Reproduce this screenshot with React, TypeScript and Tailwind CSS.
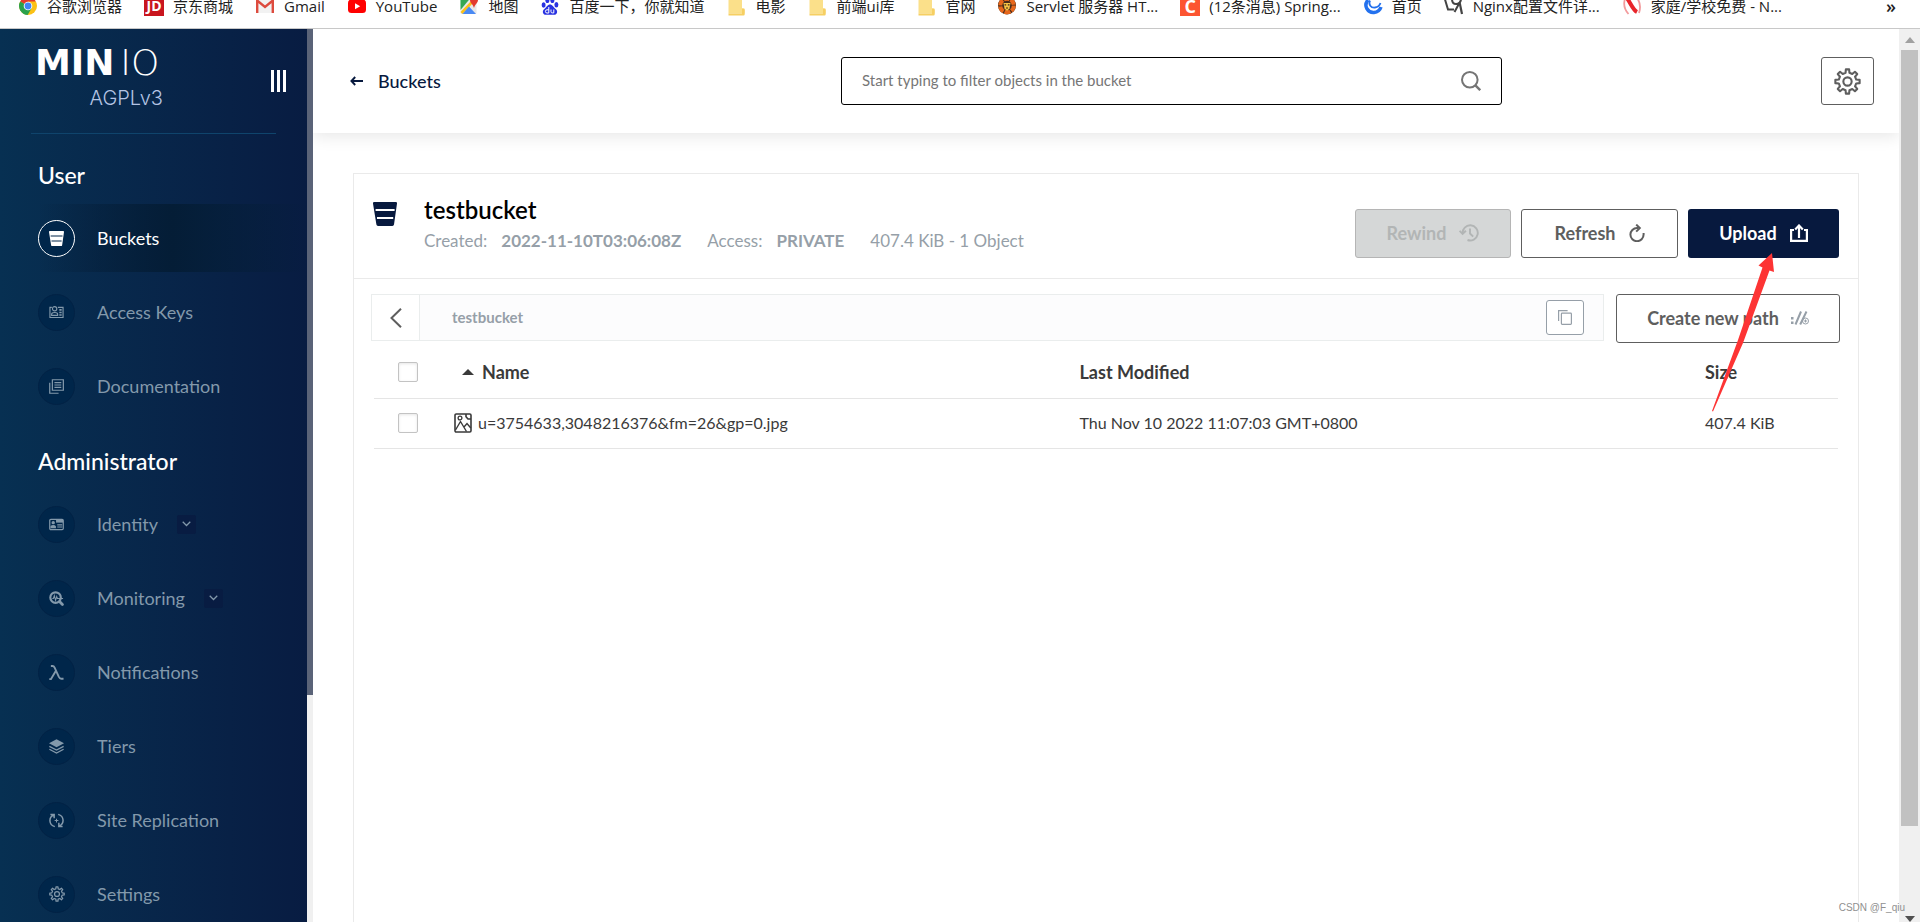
import React from "react";

type IconProps = { className?: string };

function gearPath(cx: number, cy: number, outer: number, inner: number, teeth: number): string {
  const points: string[] = [];
  const step = (Math.PI * 2) / teeth;
  const add = (angle: number, radius: number) =>
    points.push(`${(cx + Math.sin(angle) * radius).toFixed(2)} ${(cy - Math.cos(angle) * radius).toFixed(2)}`);
  for (let i = 0; i < teeth; i++) {
    const a = i * step;
    add(a - step * 0.28, inner);
    add(a - step * 0.17, outer);
    add(a + step * 0.17, outer);
    add(a + step * 0.28, inner);
  }
  return `M${points.join("L")}Z`;
}

const GearIcon = ({ className }: IconProps) => (
  <svg viewBox="0 0 26 26" className={className} fill="none" stroke="currentColor" strokeWidth="2" strokeLinejoin="round">
    <path d={gearPath(13, 13, 11.8, 8.6, 8)} />
    <ellipse cx="13" cy="13" rx="4" ry="4" />
  </svg>
);

const BucketIcon = ({ className, line }: IconProps & { line: string }) => (
  <svg viewBox="0 0 24 24" className={className}>
    <path fill="currentColor" d="M1.2 0h21.6a1.2 1.2 0 0 1 1.2 1.4L21 22.6a1.7 1.7 0 0 1-1.7 1.4H5.100a1.700 1.700 0 0 1-1.700-1.400L0 1.400A1.200 1.200 0 0 1 1.200 0Z" />
    <path stroke={line} strokeWidth="1.8" d="M2.600 8h19M4 16h16.200" />
  </svg>
);

const AccessKeysIcon = ({ className }: IconProps) => (
  <svg viewBox="0 0 16 16" className={className} fill="none" stroke="currentColor" strokeWidth="1.2">
    <path d="M3 2.500H1v10.800h14V2.500H9.500" />
    <circle cx="6" cy="4" r="2.300" />
    <path d="M2.800 11V9.800C2.800 8.500 4 8 6 8s3.200.5 3.200 1.800V11Z" />
    <path d="M11 5.200h2.500M11 8h2.500M11 10.700h2.500" strokeWidth="1.700" />
  </svg>
);

const DocumentationIcon = ({ className }: IconProps) => (
  <svg viewBox="0 0 16 16" className={className} fill="none" stroke="currentColor" strokeWidth="1.300">
    <path d="M3.600.8h11.700v11.200H3.600ZM.8 4v11.200h9.400" />
    <path d="M5.800 3.800h7.300M5.800 6.400h7.300M5.800 9h7.300" />
  </svg>
);

const IdentityIcon = ({ className }: IconProps) => (
  <svg viewBox="0 0 16 16" className={className}>
    <rect x=".8" y="2.600" width="14.400" height="10.800" rx="1.200" fill="none" stroke="currentColor" strokeWidth="1.300" />
    <path fill="currentColor" d="M7.500 3H15v3H7.500Z" />
    <circle cx="4.500" cy="6" r="1.800" fill="currentColor" />
    <path fill="currentColor" d="M1.600 12V9.800q1-1.200 2.900-1.200T7.400 9.800V12Z" />
    <path stroke="currentColor" strokeWidth="1.200" d="M8.800 8.400H14M8.800 10.700H14" />
  </svg>
);

const MonitoringIcon = ({ className }: IconProps) => (
  <svg viewBox="0 0 16 16" className={className} fill="none" stroke="currentColor">
    <circle cx="7" cy="7" r="5.600" strokeWidth="2.300" />
    <path strokeWidth="3" strokeLinecap="round" d="m11.500 11.500 2.800 2.800" />
    <path strokeWidth="1.100" d="M3.500 8h1.200l1-3 1.300 5 1.200-4 .8 2H15" />
  </svg>
);

const LambdaIcon = ({ className }: IconProps) => (
  <svg viewBox="0 0 16 16" className={className} fill="none" stroke="currentColor" strokeWidth="2">
    <path d="M2 1h1.800c1.200 0 1.600.6 2.200 1.900l4.500 9.800c.7 1.400 1.200 2 2.500 2h2.500M7.400 6.200 2 15.200H.3" />
  </svg>
);

const TiersIcon = ({ className }: IconProps) => (
  <svg viewBox="0 0 16 16" className={className} fill="none" stroke="currentColor" strokeWidth="1.400">
    <path fill="currentColor" stroke="none" d="M8 .3 16 4.500 8 8.800 0 4.500Z" />
    <path d="m.4 7.800 7.600 4 7.600-4M.4 10.900l7.600 4 7.600-4" />
  </svg>
);

const ReplicationIcon = ({ className }: IconProps) => (
  <svg viewBox="0 0 16 16" className={className} fill="none" stroke="currentColor" strokeWidth="1.600">
    <path d="M6.200 14.500C-.5 12.500-.5 4.500 5 2.200M1.500 1.500h4v4M9.800 1.500c6.700 2 6.700 10 1.200 12.300M14.500 14.500h-4v-4" />
    <path strokeWidth="1.100" d="M8 6v4M6 8h4" />
  </svg>
);

const SearchIcon = ({ className }: IconProps) => (
  <svg viewBox="0 0 20 20" className={className} fill="none" stroke="currentColor" strokeWidth="2">
    <circle cx="8.800" cy="8.800" r="7.800" />
    <path strokeWidth="2.400" d="m14.200 14.200 5 5" />
  </svg>
);

const RewindIcon = ({ className }: IconProps) => (
  <svg viewBox="0 0 20 18" className={className} fill="none" stroke="currentColor" strokeWidth="1.900">
    <path d="M3.600 9.500A7.600 7.600 0 1 1 8.500 16" />
    <path d="m.6 6.800 3 3.200 3.300-3.200M11 4.500v5l3.200 3.200" />
  </svg>
);

const RefreshIcon = ({ className }: IconProps) => (
  <svg viewBox="0 0 16 18" className={className} fill="none" stroke="currentColor" strokeWidth="2">
    <path d="M9.500 4H8a6.600 6.600 0 1 0 6.600 6.600V9" />
    <path d="m7.200.6 3.600 3.500-3.600 3.500" />
  </svg>
);

const UploadIcon = ({ className }: IconProps) => (
  <svg viewBox="0 0 18 18" className={className} fill="none" stroke="currentColor" strokeWidth="2.200">
    <path d="M4 6H1.100v10.900h15.800V6H14M9 14V2" />
    <path d="M5.200 5.400 9 1.500l3.800 3.900" />
  </svg>
);

const PathIcon = ({ className }: IconProps) => (
  <svg viewBox="0 0 18 14" className={className} fill="none" stroke="currentColor">
    <path fill="currentColor" stroke="none" d="M0 6h2.500v2.400H0ZM0 10.600h2.500V13H0Z" />
    <path strokeWidth="2" d="M4.500 13.500 10 .5M9.200 13.500 15.500.5" />
    <circle cx="14.500" cy="10" r="3" strokeWidth="1" />
    <path strokeWidth="1" d="M14.500 8.500v3M13 10h3" />
  </svg>
);

const CopyIcon = ({ className }: IconProps) => (
  <svg viewBox="0 0 14 15" className={className} fill="none" stroke="currentColor" strokeWidth="1.200">
    <path d="M.6 11V.6h9" />
    <rect x="3.400" y="3.200" width="10" height="11.200" rx=".8" />
  </svg>
);

const ImageFileIcon = ({ className }: IconProps) => (
  <svg viewBox="0 0 18 20" className={className} fill="none" stroke="currentColor" strokeWidth="1.600">
    <path d="M12 1H2.200A1.200 1.200 0 0 0 1 2.200v15.600A1.200 1.200 0 0 0 2.200 19h13.600a1.200 1.200 0 0 0 1.200-1.200V2.200A1.200 1.200 0 0 0 15.800 1H12v2.800L14 6h3" />
    <circle cx="6" cy="5" r="1.900" strokeWidth="1.300" />
    <path strokeWidth="1.400" d="M1.500 17 6.500 8.500l6 10M10 14l3-3.500 3.800 4.500" />
  </svg>
);

/* Bookmark favicons */
const ChromeFavicon = () => (
  <svg viewBox="0 0 20 20" className="size-5 shrink-0">
    <circle cx="10" cy="10" r="9" fill="#fbc116" />
    <path fill="#e33b2e" d="M10 10V1a9 9 0 0 1 7.800 4.500H10ZM10 10 2.200 5.500A9 9 0 0 1 17.800 5.500H10Z" />
    <path fill="#2aa14c" d="M2.200 5.500A9 9 0 0 0 9.600 19l4-6.800L10 10Z" />
    <circle cx="10" cy="10" r="4.300" fill="#fff" />
    <circle cx="10" cy="10" r="3.400" fill="#4285f4" />
  </svg>
);

const LetterFavicon = ({ text, className }: { text: string; className: string }) => (
  <span className={`flex size-5 shrink-0 items-center justify-center ${className}`}>{text}</span>
);

const GmailFavicon = () => (
  <svg viewBox="0 0 20 20" className="size-5 shrink-0">
    <path fill="#f2f2f2" d="M1 4h18v13H1Z" />
    <path fill="none" stroke="#dd4b3e" strokeWidth="2.400" d="M2.200 17V4.500L10 11l7.800-6.500V17" />
  </svg>
);

const YouTubeFavicon = () => (
  <svg viewBox="0 0 20 20" className="size-5 shrink-0">
    <rect x="1" y="3.500" width="18" height="13.500" rx="3.500" fill="#f00" />
    <path fill="#fff" d="m8 7.200 5.200 3L8 13.200Z" />
  </svg>
);

const MapsFavicon = () => (
  <svg viewBox="0 0 20 20" className="size-5 shrink-0">
    <rect x="1.500" y="2" width="16" height="16" rx="1.500" fill="#e8e8e8" />
    <path fill="#34a853" d="M1.500 2h10L1.500 14Z" />
    <path fill="#fbc116" d="M1.500 16 14 3l2 2L3.500 18Z" />
    <path fill="#4a8af4" d="m10 10.500 7 7.500H3.500Z" />
    <path fill="#e33b2e" d="M15 0a4 4 0 0 0-4 4c0 3 3 4 4 8 1-4 4-5 4-8a4 4 0 0 0-4-4Z" />
  </svg>
);

const BaiduFavicon = () => (
  <svg viewBox="0 0 20 20" className="size-5 shrink-0" fill="#2932e1">
    <ellipse cx="3.600" cy="9" rx="2" ry="2.700" />
    <ellipse cx="7.400" cy="4.200" rx="2" ry="2.800" />
    <ellipse cx="12.400" cy="4.200" rx="2" ry="2.800" />
    <ellipse cx="16.400" cy="8.800" rx="2" ry="2.700" />
    <path d="M10 8.500c2.400 0 3.400 2.800 5.600 4.500 2.800 2.200 1.500 6-1.800 5.800-2.500-.2-5.100-.2-7.600 0-3.300.2-4.600-3.600-1.800-5.800C6.600 11.300 7.600 8.500 10 8.500Z" />
    <path fill="none" stroke="#fff" strokeWidth="1" d="M8.800 11v6H7a1.500 1.500 0 0 1 0-3.200h1.800M11 13.500v2.200q0 1.200 1.200 1.200h1.600v-3.400" />
  </svg>
);

const FolderFavicon = () => (
  <svg viewBox="0 0 20 20" className="size-5 shrink-0">
    <path fill="#fbe08a" d="M2.500 1.500h12A1.500 1.500 0 0 1 16 3v9.500h2.500v5h-16Z" />
    <path fill="#f6cf62" d="M2.500 17.500v2h15a1.200 1.200 0 0 0 1.200-1.200V14a1.500 1.500 0 0 0-1.500-1.500H16v5Z" />
  </svg>
);

const LionFavicon = () => (
  <svg viewBox="0 0 20 20" className="size-5 shrink-0">
    <circle cx="10" cy="9.500" r="9" fill="#4a2d1b" />
    <g fill="none" stroke="#e8671b" strokeWidth="4">
      <circle cx="10" cy="9.500" r="6.800" strokeDasharray="6 1.120" />
    </g>
    <path fill="#f6c445" d="M6.500 7h7l-1 5.500L10 15l-2.500-2.500Z" />
    <path stroke="#3b2415" strokeWidth="1.200" d="M7.500 8.800h1.700M10.800 8.800h1.700M9 12h2" />
  </svg>
);

const SwirlFavicon = () => (
  <svg viewBox="0 0 20 20" className="size-5 shrink-0" fill="none" stroke="#2371ee">
    <path strokeWidth="3.500" d="M5 4c-5 6 0 13 6 12.500 3.500-.3 6-2.500 7-5.500" />
    <path strokeWidth="1.800" d="M7 4.500c-2 4 1 7.500 5 7 2.500-.3 4.500-1.500 5.500-4.500" />
  </svg>
);

const NginxFavicon = () => (
  <svg viewBox="0 0 20 20" className="size-5 shrink-0" fill="none" stroke="#444">
    <path strokeWidth="2" d="M1 3.500 4 13.500h6M8 3q0 5 4 5t5-4L10.500 16" />
    <path strokeWidth="2.200" d="m15.500 6 2.500 12" />
  </svg>
);

const RibbonFavicon = () => (
  <svg viewBox="0 0 20 20" className="size-5 shrink-0" fill="none">
    <path stroke="#e8252b" strokeWidth="4" d="M5.500 3c2.500 3 5.500 11 9.500 13" />
    <path stroke="#f29b9d" strokeWidth="1.800" d="M3 3c-2 6 0 11 3.500 15M17 17c2-6 1-11-2-15" />
  </svg>
);

const bookmarks: { label: string; icon: React.ReactNode }[] = [
  { label: "谷歌浏览器", icon: <ChromeFavicon /> },
  { label: "京东商城", icon: <LetterFavicon text="JD" className="bg-[#c9151e] text-sm font-bold text-white" /> },
  { label: "Gmail", icon: <GmailFavicon /> },
  { label: "YouTube", icon: <YouTubeFavicon /> },
  { label: "地图", icon: <MapsFavicon /> },
  { label: "百度一下，你就知道", icon: <BaiduFavicon /> },
  { label: "电影", icon: <FolderFavicon /> },
  { label: "前端ui库", icon: <FolderFavicon /> },
  { label: "官网", icon: <FolderFavicon /> },
  { label: "Servlet 服务器 HT...", icon: <LionFavicon /> },
  { label: "(12条消息) Spring...", icon: <LetterFavicon text="C" className="bg-[#fc5531] text-lg font-bold text-white" /> },
  { label: "首页", icon: <SwirlFavicon /> },
  { label: "Nginx配置文件详...", icon: <NginxFavicon /> },
  { label: "家庭/学校免费 - N...", icon: <RibbonFavicon /> },
];

function BookmarksBar() {
  return (
    <nav
      aria-label="Bookmarks"
      className="flex h-[29px] shrink-0 items-start justify-between overflow-hidden border-b border-[#c8c8c8] bg-white pr-6 pl-[18px] font-['Open_Sans','Noto_Sans_CJK_SC',sans-serif] text-[15px] leading-5 text-[#222]"
    >
      <ul className="-mt-1 flex gap-[22px]">
        {bookmarks.map((b) => (
          <li key={b.label}>
            <a href="#" className="flex items-center gap-[9px] whitespace-nowrap">
              {b.icon}
              <span>{b.label}</span>
            </a>
          </li>
        ))}
      </ul>
      <button type="button" aria-label="More bookmarks" className="-mt-1 text-lg leading-5 font-semibold">
        »
      </button>
    </nav>
  );
}

type NavEntry = { label: string; icon: React.ReactNode; active?: boolean; expandable?: boolean };

const userItems: NavEntry[] = [
  { label: "Buckets", icon: <BucketIcon className="size-[15px]" line="#00264a" />, active: true },
  { label: "Access Keys", icon: <AccessKeysIcon className="size-[15px]" /> },
  { label: "Documentation", icon: <DocumentationIcon className="size-[15px]" /> },
];

const adminItems: NavEntry[] = [
  { label: "Identity", icon: <IdentityIcon className="size-[15px]" />, expandable: true },
  { label: "Monitoring", icon: <MonitoringIcon className="size-[15px]" />, expandable: true },
  { label: "Notifications", icon: <LambdaIcon className="size-[15px]" /> },
  { label: "Tiers", icon: <TiersIcon className="size-[15px]" /> },
  { label: "Site Replication", icon: <ReplicationIcon className="size-[15px]" /> },
  { label: "Settings", icon: <GearIcon className="size-4" /> },
];

function NavItem({ label, icon, active, expandable }: NavEntry) {
  return (
    <li>
      <a
        href="#"
        className={
          active
            ? "flex h-[68px] items-center bg-linear-to-r from-transparent via-[#041d36] to-transparent text-white"
            : "flex h-[68px] items-center text-[#8399ab]"
        }
      >
        <span
          className={
            active
              ? "flex size-[37px] items-center justify-center rounded-full border border-white bg-[#00264a]"
              : "flex size-[37px] items-center justify-center rounded-full border border-[#022245] bg-[#00264a]"
          }
        >
          {icon}
        </span>
        <span className="ml-[22px] text-lg">{label}</span>
        {expandable && (
          <span className="ml-[19px] flex size-[19px] items-center justify-center rounded-xs bg-[#081c42]">
            <svg viewBox="0 0 10 6" className="w-[9px]" fill="none" stroke="currentColor" strokeWidth="1.400">
              <path d="m.8.800 4.200 4.200 4.200-4.200" />
            </svg>
          </span>
        )}
      </a>
    </li>
  );
}

function NavSection({ title, items }: { title: string; items: NavEntry[] }) {
  return (
    <section>
      <h2 className="flex h-[70px] items-center pt-3 text-[23px] font-medium text-white">{title}</h2>
      <ul className="flex flex-col gap-1.5">
        {items.map((item) => (
          <NavItem key={item.label} {...item} />
        ))}
      </ul>
    </section>
  );
}

function Sidebar() {
  return (
    <aside className="flex w-[313px] shrink-0 overflow-hidden">
      <div className="flex-1 bg-linear-to-r from-[#073052] to-[#081c42]">
        <div className="mx-[31px] flex h-[105px] justify-between border-b border-[#0f446c] pl-1">
          <div className="flex w-32 flex-col pt-[17px]">
            <div className="flex gap-1.5 text-4xl leading-[34px] text-white">
              <span className="font-['DejaVu_Sans',sans-serif] font-bold">MIN</span>
              <span className="font-['DejaVu_Sans_Light','DejaVu_Sans',sans-serif] font-extralight">IO</span>
            </div>
            <div className="pt-1.5 text-right font-['Inter',sans-serif] text-xl leading-6 font-light text-[#b4c4e4]">AGPLv3</div>
          </div>
          <button type="button" aria-label="Collapse menu" className="mt-[41px] -mr-2.5 flex h-[22px] gap-[3px] self-start">
            <span className="w-[3px] self-stretch bg-white" />
            <span className="w-[3px] self-stretch bg-white" />
            <span className="w-[3px] self-stretch bg-white" />
          </button>
        </div>
        <nav aria-label="Main" className="pl-[38px]">
          <NavSection title="User" items={userItems} />
          <NavSection title="Administrator" items={adminItems} />
        </nav>
      </div>
      <div aria-hidden="true" className="flex w-1.5 flex-col bg-[#f0f0f0]">
        <div className="h-[74.6%] bg-[#5a6378]" />
      </div>
    </aside>
  );
}

function PageHeader() {
  return (
    <header className="relative grid h-[104px] shrink-0 grid-cols-[491fr_661fr_372fr] items-center bg-white pr-[25px] pl-[37px] shadow-[0_3px_16px_rgba(0,0,0,0.1)]">
      <a href="#" className="flex items-center gap-[15px] text-lg font-medium text-[#07193e]">
        <svg viewBox="0 0 13 10" className="w-[13px]" fill="none" stroke="currentColor" strokeWidth="1.900">
          <path d="M13 5H2M5.200 1 1.400 5l3.800 4" />
        </svg>
        Buckets
      </a>
      <div className="flex h-12 items-center rounded-[3px] border border-black px-5">
        <input
          type="search"
          aria-label="Filter objects"
          placeholder="Start typing to filter objects in the bucket"
          className="min-w-0 flex-1 pb-0.5 text-[15px] outline-none placeholder:text-[#767676]"
        />
        <SearchIcon className="size-5 text-[#757575]" />
      </div>
      <button type="button" aria-label="Settings" className="flex h-12 w-[53px] items-center justify-center justify-self-end rounded-[3px] border border-[#5e5e5e] text-[#5e5e5e]">
        <GearIcon className="size-[27px]" />
      </button>
    </header>
  );
}

function BucketSummary() {
  return (
    <div className="flex h-[105px] items-start justify-between border-b border-[#eaeaea] px-[19px]">
      <div className="flex gap-[27px]">
        <BucketIcon className="mt-7 size-6 text-[#07193e]" line="#fff" />
        <div className="pt-[21px]">
          <h1 className="text-2xl leading-[30px] font-semibold text-black">testbucket</h1>
          <div className="flex gap-[26px] text-[17px] leading-8 text-[#969fa8]">
            <span className="flex gap-3.5">
              Created: <strong className="font-bold">2022-11-10T03:06:08Z</strong>
            </span>
            <span className="flex gap-3.5">
              Access: <strong className="font-bold">PRIVATE</strong>
            </span>
            <span>407.4 KiB - 1 Object</span>
          </div>
        </div>
      </div>
      <div className="flex gap-2.5 pt-[35px] text-lg font-bold">
        <button type="button" disabled className="flex h-[49px] w-[156px] items-center justify-center gap-[13px] rounded-[3px] border border-[#b5b5b5] bg-[#d5d7d7] pb-0.5 text-[#b2b5b5]">
          Rewind <RewindIcon className="w-5" />
        </button>
        <button type="button" className="flex h-[49px] w-[157px] items-center justify-center gap-[13px] rounded-[3px] border border-[#5e5e5e] pb-0.5 text-[#5e5e5e]">
          Refresh <RefreshIcon className="w-4" />
        </button>
        <button type="button" className="flex h-[49px] w-[151px] items-center justify-center gap-[13px] rounded-[3px] bg-[#07193e] pb-0.5 text-white">
          Upload <UploadIcon className="w-[18px]" />
        </button>
      </div>
    </div>
  );
}

function PathBar() {
  return (
    <div className="flex items-start gap-3 pt-[15px] pr-[18px] pl-[17px]">
      <div className="flex h-[47px] flex-1 border border-[#eaeded] bg-[#fcfcfd]">
        <button type="button" aria-label="Back" className="flex w-12 items-center justify-center border-r border-[#eaeded] bg-white text-[#5e5e5e]">
          <svg viewBox="0 0 12 20" className="w-3" fill="none" stroke="currentColor" strokeWidth="2">
            <path d="m11 .8-9.500 9.200L11 19.200" />
          </svg>
        </button>
        <div className="flex flex-1 items-center justify-between pr-[19px] pl-8">
          <a href="#" className="text-[15px] font-bold text-[#969fa8]">testbucket</a>
          <button type="button" aria-label="Copy path" className="flex h-[35px] w-[38px] items-center justify-center rounded-[3px] border border-[#969fa8] bg-white text-[#969fa8]">
            <CopyIcon className="w-3.5" />
          </button>
        </div>
      </div>
      <button type="button" className="flex h-[49px] w-56 items-center justify-center gap-3 rounded-[3px] border border-[#5e5e5e] pb-0.5 text-lg font-bold text-[#5e5e5e]">
        Create new path <PathIcon className="w-[18px] text-[#969fa8]" />
      </button>
    </div>
  );
}

function ObjectsTable() {
  const checkbox = "block size-5 appearance-none rounded-xs border border-[#c3c3c3] bg-white shadow-[inset_0_1px_3px_rgba(0,0,0,0.1)]";
  return (
    <div className="px-5 pt-1">
      <table className="w-full table-fixed text-left text-[#3a3a3a]">
        <colgroup>
          <col className="w-20" />
          <col />
          <col />
          <col className="w-[133px]" />
        </colgroup>
        <thead>
          <tr className="h-[51px] border-b border-[#e5e5e5] text-lg">
            <th scope="col" className="pl-6">
              <input type="checkbox" aria-label="Select all" className={checkbox} />
            </th>
            <th scope="col" className="pl-2 font-bold">
              <span className="flex items-center gap-2">
                <svg viewBox="0 0 12 6" className="w-3" fill="currentColor">
                  <path d="M6 0 12 6H0Z" />
                </svg>
                Name
              </span>
            </th>
            <th scope="col" className="font-bold">Last Modified</th>
            <th scope="col" className="font-bold">Size</th>
          </tr>
        </thead>
        <tbody>
          <tr className="h-[50px] border-b border-[#e5e5e5] text-base">
            <td className="pl-6">
              <input type="checkbox" aria-label="Select u=3754633,3048216376&fm=26&gp=0.jpg" className={checkbox} />
            </td>
            <td>
              <span className="flex items-center gap-1.5">
                <ImageFileIcon className="w-[18px]" />
                u=3754633,3048216376&amp;fm=26&amp;gp=0.jpg
              </span>
            </td>
            <td>Thu Nov 10 2022 11:07:03 GMT+0800</td>
            <td>407.4 KiB</td>
          </tr>
        </tbody>
      </table>
    </div>
  );
}

function PageScrollbar() {
  return (
    <div aria-hidden="true" className="flex w-[21px] shrink-0 flex-col items-center justify-between bg-[#f0f0f0]">
      <svg viewBox="0 0 10 6" className="mt-2 mb-[7px] w-2.5 shrink-0 fill-[#a0a0a0]">
        <path d="M5 0 10 6H0Z" />
      </svg>
      <div className="flex min-h-0 w-full flex-1 px-0.5">
        <div className="h-[89.6%] w-full bg-[#c1c1c1]" />
      </div>
      <svg viewBox="0 0 10 6" className="w-2.5 shrink-0 fill-[#505050]">
        <path d="M5 6 10 0H0Z" />
      </svg>
    </div>
  );
}

export default function App() {
  return (
    <div className="relative flex h-screen flex-col overflow-hidden bg-white font-['Lato',sans-serif]">
      <BookmarksBar />
      <div className="flex min-h-0 flex-1">
        <Sidebar />
        <main className="flex min-w-0 flex-1 flex-col overflow-hidden">
          <PageHeader />
          <div className="mx-10 mt-10 flex-1 border border-b-0 border-[#eaeaea] bg-white">
            <BucketSummary />
            <PathBar />
            <ObjectsTable />
          </div>
        </main>
        <PageScrollbar />
      </div>
      <svg aria-hidden="true" viewBox="0 0 64 160" className="pointer-events-none absolute top-[252px] right-[145px] h-40 w-16">
        <path fill="#fd3434" d="M61 1 63 20 58.500 18.500 32 91 2 159.500 1 159 27 88 51.500 15.500 47.500 13.500Z" />
      </svg>
      <p className="pointer-events-none absolute right-[15px] bottom-1.5 font-['Liberation_Sans',sans-serif] text-[10px] leading-4 text-[#909090]">
        CSDN @F_qiu
      </p>
    </div>
  );
}
